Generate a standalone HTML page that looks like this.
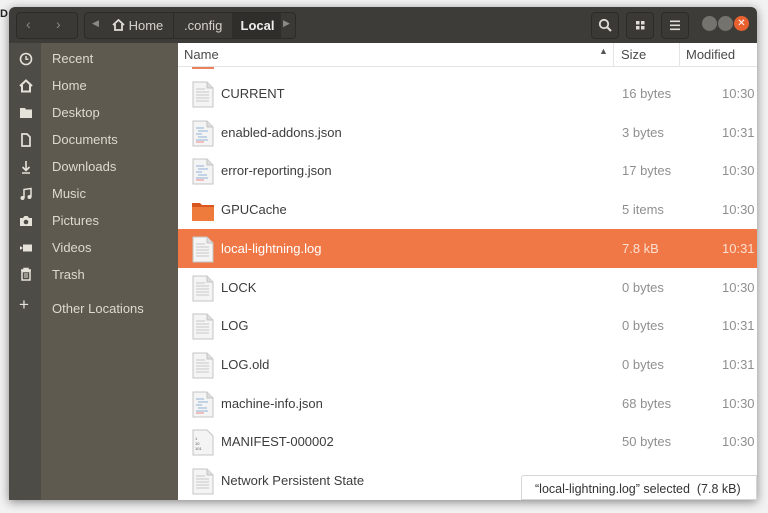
<!DOCTYPE html>
<html><head><meta charset="utf-8"><style>
*{margin:0;padding:0;box-sizing:border-box}
body{width:768px;height:513px;background:#f2f2f2;font-family:"Liberation Sans",sans-serif;position:relative;overflow:hidden}
.win{position:absolute;left:9px;top:7px;width:748px;height:493px;background:#fff;box-shadow:0 2px 10px rgba(0,0,0,.45);border-radius:6px 6px 0 0;overflow:hidden}
.hdr{position:absolute;left:0;top:0;width:748px;height:36px;background:#3d3c38}
.btn{position:absolute;top:5px;height:27px;border:1px solid #2c2b28;border-radius:4px;background:#3a3935}
.crumb{position:absolute;top:6px;height:25px;color:#d5d2cb;font-size:13px;line-height:25px}
.side1{position:absolute;left:0;top:36px;width:32px;height:457px;background:#4e4c46}
.side2{position:absolute;left:32px;top:36px;width:137px;height:457px;background:#5e5a4f}
.si{position:absolute;left:43px;color:#dedad0;font-size:13px}
.ic{position:absolute;left:10px;width:14px;height:14px}
.colh{position:absolute;top:36px;left:169px;width:579px;height:24px;border-bottom:1px solid #e4e4e4;font-size:13px;color:#4a4a4a}
.row{position:absolute;left:169px;width:579px;height:39px;font-size:13px;color:#3c3c3c}
.row .n{position:absolute;left:43px;top:12px}
.row .s{position:absolute;left:444px;top:12px;color:#8f8f8f}
.row .t{position:absolute;left:544px;top:12px;color:#8f8f8f}
.row.sel{background:#f07746;color:#fff}
.row.sel .s,.row.sel .t{color:#fde0d2}
.doc{position:absolute;left:14px;top:7px;width:22px;height:27px}
</style></head><body>
<div style="position:absolute;left:0;top:8px;font-size:11px;font-weight:bold;color:#222">D</div>
<div class="win">
<div class="hdr">
 <div class="btn" style="left:7px;width:62px"></div>
 <div style="position:absolute;left:17px;top:9px;color:#8c8a84;font-size:14px">&#8249;</div>
 <div style="position:absolute;left:47px;top:9px;color:#8c8a84;font-size:14px">&#8250;</div>
 <div class="btn" style="left:75px;width:212px"></div>
 <div style="position:absolute;left:83px;top:11px;color:#8c8a84;font-size:9px">&#9664;</div>
 <div class="crumb" style="left:97px;width:68px;border-right:1px solid #2c2b28;padding-left:6px"><svg width="13" height="12" viewBox="0 0 13 12" style="vertical-align:-1px"><path d="M1 6L6.5 1 12 6M3 5v6h7V5" fill="none" stroke="#e0ddd6" stroke-width="1.8"/></svg> Home</div>
 <div class="crumb" style="left:165px;width:58px;padding-left:10px">.config</div>
 <div class="crumb" style="left:223px;width:49px;background:#2f2e2b;font-weight:bold;padding-left:2px;color:#eee;text-align:center">Local</div>
 <div style="position:absolute;left:274px;top:11px;color:#8c8a84;font-size:9px">&#9654;</div>
 <div class="btn" style="left:582px;width:28px"><svg width="26" height="25" viewBox="0 0 26 25"><circle cx="12" cy="11" r="4.2" fill="none" stroke="#e0ddd6" stroke-width="1.8"/><path d="M15 14l4 4" stroke="#e0ddd6" stroke-width="2"/></svg></div>
 <div class="btn" style="left:617px;width:28px"><svg width="26" height="25" viewBox="0 0 26 25" fill="#e0ddd6"><rect x="9" y="8" width="3.5" height="3.5"/><rect x="14" y="8" width="3.5" height="3.5"/><rect x="9" y="13" width="3.5" height="3.5"/><rect x="14" y="13" width="3.5" height="3.5"/></svg></div>
 <div class="btn" style="left:652px;width:28px"><svg width="26" height="25" viewBox="0 0 26 25" fill="#e0ddd6"><rect x="8" y="7.5" width="10" height="1.6"/><rect x="8" y="11.5" width="10" height="1.6"/><rect x="8" y="15.5" width="10" height="1.6"/></svg></div>
 <div style="position:absolute;left:693px;top:9px;width:15px;height:15px;border-radius:50%;background:#75736d"></div>
 <div style="position:absolute;left:709px;top:9px;width:15px;height:15px;border-radius:50%;background:#75736d"></div>
 <div style="position:absolute;left:725px;top:9px;width:15px;height:15px;border-radius:50%;background:#e9612f;color:#fff;font-size:10px;text-align:center;line-height:15px">&#10005;</div>
</div>
<div class="side1"></div><div class="side2"></div>
<svg class="ic" style="top:45px" viewBox="0 0 14 14"><circle cx="7" cy="7" r="5.5" fill="none" stroke="#e5e2da" stroke-width="1.6"/><path d="M7 4v3.2h2.5" fill="none" stroke="#e5e2da" stroke-width="1.4"/></svg><div class="si" style="top:44px">Recent</div>
<svg class="ic" style="top:72px" viewBox="0 0 14 14"><path d="M1 7L7 1.5 13 7M3 6v6.5h8V6" fill="none" stroke="#e5e2da" stroke-width="2"/></svg><div class="si" style="top:71px">Home</div>
<svg class="ic" style="top:99px" viewBox="0 0 14 14"><path d="M1 2h5l1 1.5h6V12H1z" fill="#e5e2da"/></svg><div class="si" style="top:98px">Desktop</div>
<svg class="ic" style="top:126px" viewBox="0 0 14 14"><path d="M3 1h5l3 3v9H3z" fill="none" stroke="#e5e2da" stroke-width="1.7"/></svg><div class="si" style="top:125px">Documents</div>
<svg class="ic" style="top:153px" viewBox="0 0 14 14"><path d="M7 1v9M3.5 7L7 10.5 10.5 7M3 13h8" fill="none" stroke="#e5e2da" stroke-width="1.6"/></svg><div class="si" style="top:152px">Downloads</div>
<svg class="ic" style="top:180px" viewBox="0 0 14 14"><path d="M5 11V2.5l7-1V10" fill="none" stroke="#e5e2da" stroke-width="1.5"/><circle cx="3.5" cy="11" r="2" fill="#e5e2da"/><circle cx="10.5" cy="10" r="2" fill="#e5e2da"/></svg><div class="si" style="top:179px">Music</div>
<svg class="ic" style="top:207px" viewBox="0 0 14 14"><path d="M1 4h3l1.5-2h3L10 4h3v8H1z" fill="#e5e2da"/><circle cx="7" cy="8" r="2.3" fill="#4e4c46"/></svg><div class="si" style="top:206px">Pictures</div>
<svg class="ic" style="top:234px" viewBox="0 0 14 14"><rect x="4" y="3.5" width="9" height="7" fill="#e5e2da"/><path d="M1 5l3 2-3 2z" fill="#e5e2da"/></svg><div class="si" style="top:233px">Videos</div>
<svg class="ic" style="top:260px" viewBox="0 0 14 14"><path d="M2 3h10M5 3V1.5h4V3M3 4.5h8V13H3z" fill="none" stroke="#e5e2da" stroke-width="1.5"/><path d="M6 6v5M8 6v5" stroke="#e5e2da"/></svg><div class="si" style="top:260px">Trash</div>
<div style="position:absolute;left:10px;top:288px;color:#e5e2da;font-size:17px">+</div><div class="si" style="top:294px">Other Locations</div>

<div class="colh"><span style="position:absolute;left:6px;top:4px">Name</span><span style="position:absolute;left:421px;top:3px;font-size:9px;color:#555">&#9650;</span><span style="position:absolute;left:435px;top:0;height:24px;border-left:1px solid #e4e4e4;padding:4px 0 0 7px">Size</span><span style="position:absolute;left:501px;top:0;height:24px;border-left:1px solid #e4e4e4;padding:4px 0 0 6px">Modified</span></div>
<div style="position:absolute;left:183px;top:60px;width:22px;height:2px;background:#e9815a"></div>

<svg width="0" height="0" style="position:absolute"><defs>
<g id="d"><path d="M1 1h14l6 6v19H1z" fill="#f4f4f4" stroke="#c4c4c4"/><path d="M15 1v6h6" fill="#ddd" stroke="#c4c4c4"/><path d="M4 8h9M4 11h13M4 14h13M4 17h13M4 20h13" stroke="#c9c9c9"/></g>
<g id="j"><path d="M1 1h14l6 6v19H1z" fill="#f4f4f4" stroke="#c4c4c4"/><path d="M15 1v6h6" fill="#ddd" stroke="#c4c4c4"/><path d="M4 8h8M6 11h10M4 14h6M6 17h9M4 20h12" stroke="#8fb2d6"/><path d="M4 22h8" stroke="#e88"/></g>
</defs></svg>

<div class="row" style="top:67px"><svg class="doc" viewBox="0 0 22 27"><use href="#d"/></svg><span class="n">CURRENT</span><span class="s">16 bytes</span><span class="t">10:30</span></div>
<div class="row" style="top:106px"><svg class="doc" viewBox="0 0 22 27"><use href="#j"/></svg><span class="n">enabled-addons.json</span><span class="s">3 bytes</span><span class="t">10:31</span></div>
<div class="row" style="top:144px"><svg class="doc" viewBox="0 0 22 27"><use href="#j"/></svg><span class="n">error-reporting.json</span><span class="s">17 bytes</span><span class="t">10:30</span></div>
<div class="row" style="top:183px"><svg class="doc" viewBox="0 0 24 27" style="width:26px;left:12px"><path d="M1 6h8l2 2h12v16H1z" fill="#d9561f"/><path d="M1 10h22v14H1z" fill="#ee7a3c"/></svg><span class="n">GPUCache</span><span class="s">5 items</span><span class="t">10:30</span></div>
<div class="row sel" style="top:222px"><svg class="doc" viewBox="0 0 22 27"><use href="#d"/></svg><span class="n">local-lightning.log</span><span class="s">7.8 kB</span><span class="t">10:31</span></div>
<div class="row" style="top:261px"><svg class="doc" viewBox="0 0 22 27"><use href="#d"/></svg><span class="n">LOCK</span><span class="s">0 bytes</span><span class="t">10:30</span></div>
<div class="row" style="top:299px"><svg class="doc" viewBox="0 0 22 27"><use href="#d"/></svg><span class="n">LOG</span><span class="s">0 bytes</span><span class="t">10:31</span></div>
<div class="row" style="top:338px"><svg class="doc" viewBox="0 0 22 27"><use href="#d"/></svg><span class="n">LOG.old</span><span class="s">0 bytes</span><span class="t">10:31</span></div>
<div class="row" style="top:377px"><svg class="doc" viewBox="0 0 22 27"><use href="#j"/></svg><span class="n">machine-info.json</span><span class="s">68 bytes</span><span class="t">10:30</span></div>
<div class="row" style="top:415px"><svg class="doc" viewBox="0 0 22 27"><path d="M1 1h14l6 6v19H1z" fill="#f4f4f4" stroke="#c4c4c4"/><text x="3" y="11" font-size="4" fill="#555">1</text><text x="3" y="16" font-size="4" fill="#555">10</text><text x="3" y="21" font-size="4" fill="#555">101</text></svg><span class="n">MANIFEST-000002</span><span class="s">50 bytes</span><span class="t">10:30</span></div>
<div class="row" style="top:454px"><svg class="doc" viewBox="0 0 22 27"><use href="#d"/></svg><span class="n">Network Persistent State</span></div>
<div style="position:absolute;left:512px;top:468px;width:236px;height:25px;background:#fff;border:1px solid #d6d6d6;border-radius:3px 0 0 0;font-size:12.5px;color:#333;padding:6px 0 0 13px">“local-lightning.log” selected&nbsp; (7.8 kB)</div>
</div>
</body></html>
